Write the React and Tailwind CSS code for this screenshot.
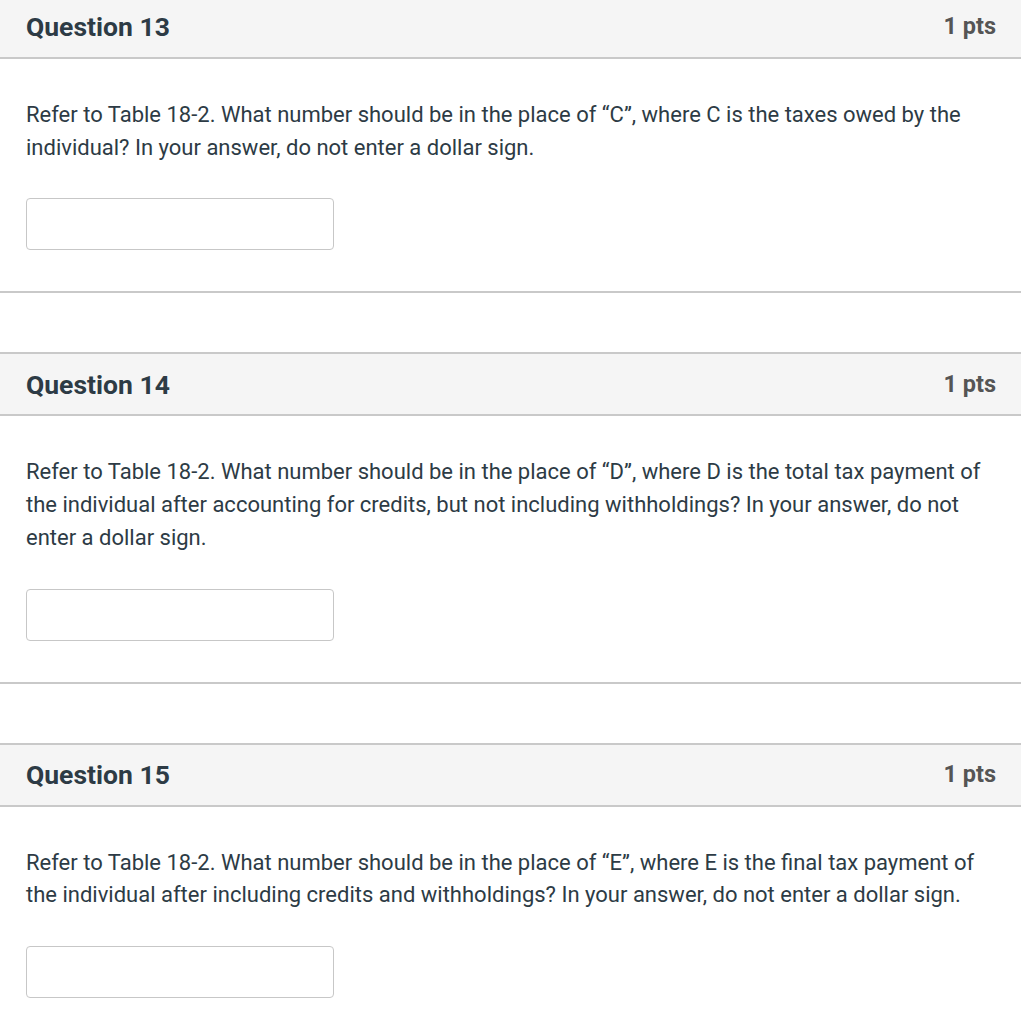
import React from 'react';

const questions = [
  {
    id: 13,
    text: 'Refer to Table 18-2. What number should be in the place of \u201cC\u201d, where C is the taxes owed by the individual? In your answer, do not enter a dollar sign.',
  },
  {
    id: 14,
    text: 'Refer to Table 18-2. What number should be in the place of \u201cD\u201d, where D is the total tax payment of the individual after accounting for credits, but not including withholdings? In your answer, do not enter a dollar sign.',
  },
  {
    id: 15,
    text: 'Refer to Table 18-2. What number should be in the place of \u201cE\u201d, where E is the final tax payment of the individual after including credits and withholdings? In your answer, do not enter a dollar sign.',
  },
];

const Question = ({ q }) => (
  <div className="border-y-2 border-[#c9c9c9] mb-[59px]">
    {/* Header */}
    <div className="h-[62px] bg-[#f5f5f5] border-b-2 border-[#c9c9c9] flex items-center justify-between pl-[26px] pr-[25px]">
      <h3 className="text-[26.5px] font-bold text-[#2d3b45]">Question {q.id}</h3>
      <span className="text-[23.5px] font-bold text-[#555555]">1 pts</span>
    </div>

    {/* Body */}
    <div className="pt-[40px] pb-[41px] pl-[26px] pr-[25px]">
      <p className="text-[22px] leading-[32.7px] text-[#2d3b45]">{q.text}</p>
      <input
        type="text"
        className="mt-[34px] block w-[308px] h-[52px] border border-[#c7c7c7] rounded-[4px] bg-white px-3 outline-none"
      />
    </div>
  </div>
);

export default function App() {
  return (
    <div className="bg-white min-h-screen font-['Roboto',sans-serif] -mt-[5px]">
      {questions.map((q) => (
        <Question key={q.id} q={q} />
      ))}
    </div>
  );
}
